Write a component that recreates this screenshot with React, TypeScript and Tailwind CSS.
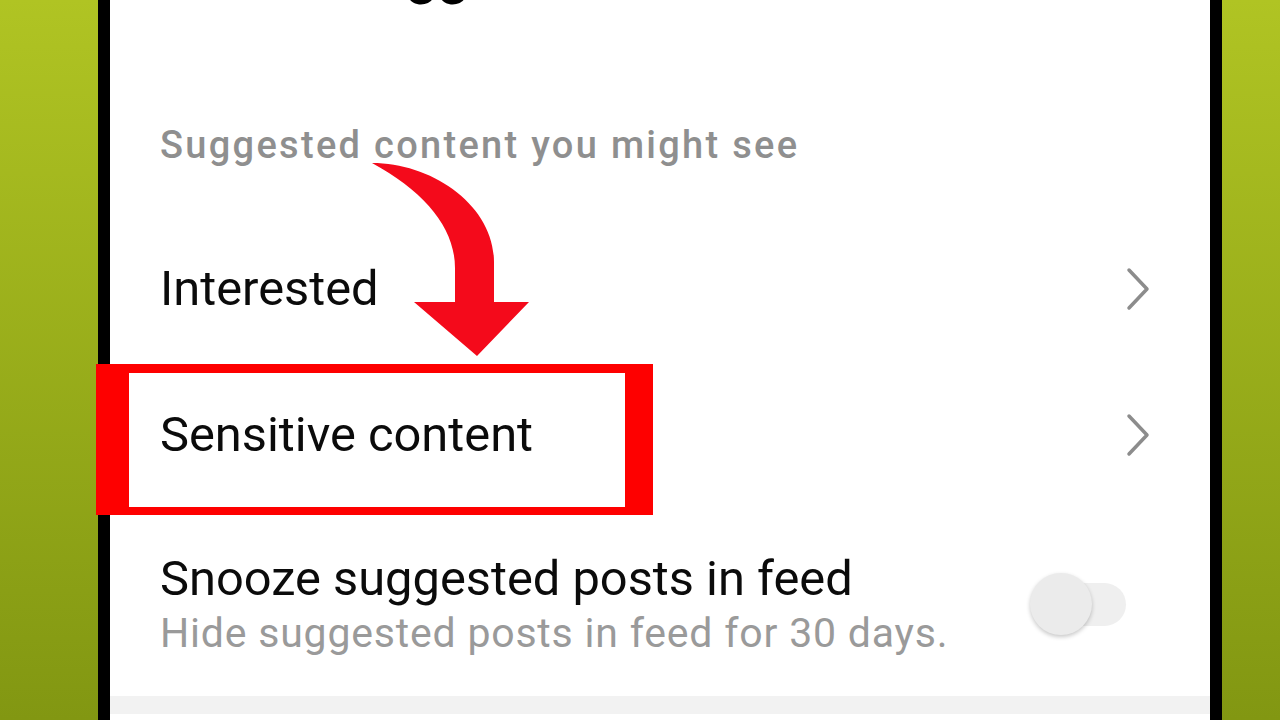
import React from "react";

function Chevron() {
  return (
    <svg width="26" height="44" viewBox="0 0 26 44" fill="none">
      <path
        d="M4 3 L22 22 L4 41"
        stroke="#8c8c8c"
        strokeWidth="3.5"
        strokeLinecap="round"
        strokeLinejoin="round"
      />
    </svg>
  );
}

function Toggle() {
  return (
    <div className="relative w-[96px] h-[62px] flex items-center">
      <div className="absolute right-0 w-[80px] h-[43px] rounded-full bg-[#efefef]" />
      <div className="absolute left-0 w-[62px] h-[62px] rounded-full bg-[#ebebeb] shadow-[0_2px_4px_rgba(0,0,0,0.22)]" />
    </div>
  );
}

function NavRow({ label }: { label: string }) {
  return (
    <div className="h-[146px] flex items-center justify-between pl-[50px] pr-[59px]">
      <span className="text-[48.8px] leading-none text-[#0b0b0b]">{label}</span>
      <Chevron />
    </div>
  );
}

export default function App() {
  return (
    <div
      className="relative w-[1280px] h-[720px] overflow-hidden flex"
      style={{ fontFamily: "Roboto, 'Liberation Sans', sans-serif" }}
    >
      <div className="w-[98px] h-full bg-gradient-to-b from-[#b0c423] to-[#829712]" />
      <div className="w-[12px] h-full bg-black" />

      {/* phone screen */}
      <div className="w-[1100px] h-full bg-white flex flex-col">
        <div className="h-[56px] mt-[-54px] pl-[231px] text-[56px] leading-none font-medium text-black whitespace-nowrap">
          Suggested content
        </div>

        <div className="mt-[126px] h-[35px] pl-[50px] text-[38px] leading-[35px] font-medium text-[#8f8f8f] tracking-[2.3px] whitespace-nowrap">
          Suggested content you might see
        </div>

        <div className="mt-[53px]">
          <NavRow label="Interested" />
          <NavRow label="Sensitive content" />
        </div>

        <div className="h-[188px] flex items-center justify-between pl-[50px] pr-[84px] pt-[4px]">
          <div className="flex flex-col">
            <span className="text-[48.8px] leading-[48px] text-[#0b0b0b] whitespace-nowrap">
              Snooze suggested posts in feed
            </span>
            <span className="mt-[10px] text-[41px] leading-[41px] text-[#9a9a9a] tracking-[0.8px] whitespace-nowrap">
              Hide suggested posts in feed for 30 days.
            </span>
          </div>
          <Toggle />
        </div>

        <div className="h-[18px] bg-[#f2f2f2]" />
        <div className="flex-1 bg-white" />
      </div>

      <div className="w-[12px] h-full bg-black" />
      <div className="flex-1 h-full bg-gradient-to-b from-[#b0c423] to-[#829712]" />

      {/* highlight frame */}
      <div className="absolute left-[96px] top-[364px] w-[557px] h-[151px] border-solid border-[#fe0000] border-l-[33px] border-t-[9px] border-r-[28px] border-b-[8px]" />

      {/* pointer arrow */}
      <svg
        className="absolute left-0 top-0 pointer-events-none"
        width="1280"
        height="720"
        viewBox="0 0 1280 720"
      >
        <path
          d="M372 163 C432 163 494 205 494 262 L494 302 L529 302 L477 356 L414 302 L455 302 L455 268 C455 228 425 192 372 163 Z"
          fill="#f40a1b"
        />
      </svg>
    </div>
  );
}
